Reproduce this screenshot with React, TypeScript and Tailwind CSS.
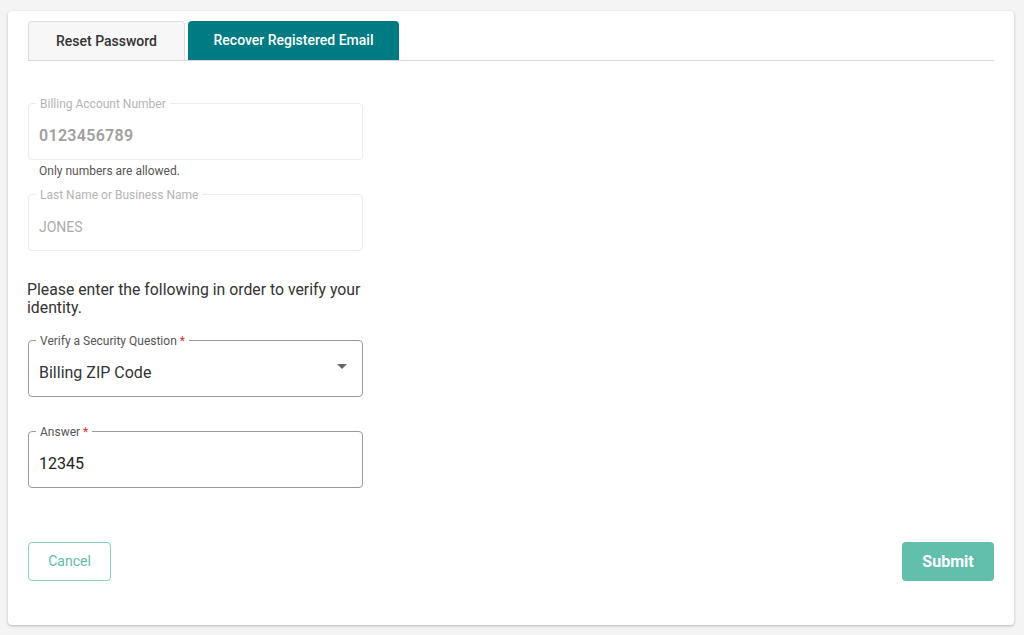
import React from "react";

function Field({
  label,
  required,
  disabled,
  children,
  right,
}: {
  label: string;
  required?: boolean;
  disabled?: boolean;
  children: React.ReactNode;
  right?: React.ReactNode;
}) {
  return (
    <div
      className={
        "relative h-[57px] w-[335px] rounded-[4px] border flex items-center pl-[10px] pr-[14px] " +
        (disabled ? "border-[#ececec]" : "border-[#9a9a9a]")
      }
    >
      <span
        className={
          "absolute -top-[7px] left-[7px] bg-white px-[4px] text-[12px] leading-[14px] " +
          (disabled ? "text-[#b4b4b4]" : "text-[#555]")
        }
      >
        {label}
        {required && <span className="text-[#e0302b]"> *</span>}
      </span>
      <div className="flex-1 pt-[8px]">{children}</div>
      {right}
    </div>
  );
}

export default function App() {
  return (
    <div
      className="min-h-[635px] w-full bg-[#f4f4f4] pt-[11px]"
      style={{ fontFamily: "Roboto, 'Liberation Sans', sans-serif" }}
    >
      <div className="ml-[8px] w-[1006px] h-[614px] rounded-[4px] bg-white shadow-[0_1px_3px_rgba(0,0,0,0.25)] px-[20px] pt-[10px] flex flex-col">
        {/* Tabs */}
        <div className="flex gap-[3px] border-b border-[#d9d9d9] w-[966px]">
          <div className="w-[157px] h-[39px] flex items-center justify-center rounded-t-[4px] border border-b-0 border-[#dedede] bg-[#f7f7f7] text-[14px] font-medium text-[#333]">
            Reset Password
          </div>
          <div className="w-[211px] h-[39px] flex items-center justify-center rounded-t-[4px] bg-[#017b83] text-[14px] font-medium text-white">
            Recover Registered Email
          </div>
        </div>

        <div className="mt-[42px]">
          <Field label="Billing Account Number" disabled>
            <span className="text-[16px] font-semibold text-[#a0a0a0] tracking-[0.3px]">0123456789</span>
          </Field>
          <div className="mt-[4px] pl-[11px] text-[12px] leading-[15px] text-[#555]">
            Only numbers are allowed.
          </div>
        </div>

        <div className="mt-[15px]">
          <Field label="Last Name or Business Name" disabled>
            <span className="text-[14px] text-[#ababab]">JONES</span>
          </Field>
        </div>

        <p className="mt-[30px] w-[345px] -ml-[1px] text-[15.8px] leading-[18px] text-[#333]">
          Please enter the following in order to verify your identity.
        </p>

        <div className="mt-[23px]">
          <Field
            label="Verify a Security Question"
            required
            right={
              <svg width="10" height="5" viewBox="0 0 10 5" className="mr-[1px] -mt-[4px]">
                <path d="M0 0 L10 0 L5 5 Z" fill="#666" />
              </svg>
            }
          >
            <span className="text-[16px] text-[#333]">Billing ZIP Code</span>
          </Field>
        </div>

        <div className="mt-[34px]">
          <Field label="Answer" required>
            <span className="text-[16px] text-[#222]">12345</span>
          </Field>
        </div>

        <div className="mt-[54px] flex justify-between w-[966px]">
          <button className="w-[83px] h-[39px] rounded-[4px] border border-[#86d3c1] text-[14px] text-[#5dbea8] bg-white">
            Cancel
          </button>
          <button className="w-[92px] h-[39px] rounded-[4px] bg-[#62bfab] text-[16px] font-bold text-white">
            Submit
          </button>
        </div>
      </div>
    </div>
  );
}
